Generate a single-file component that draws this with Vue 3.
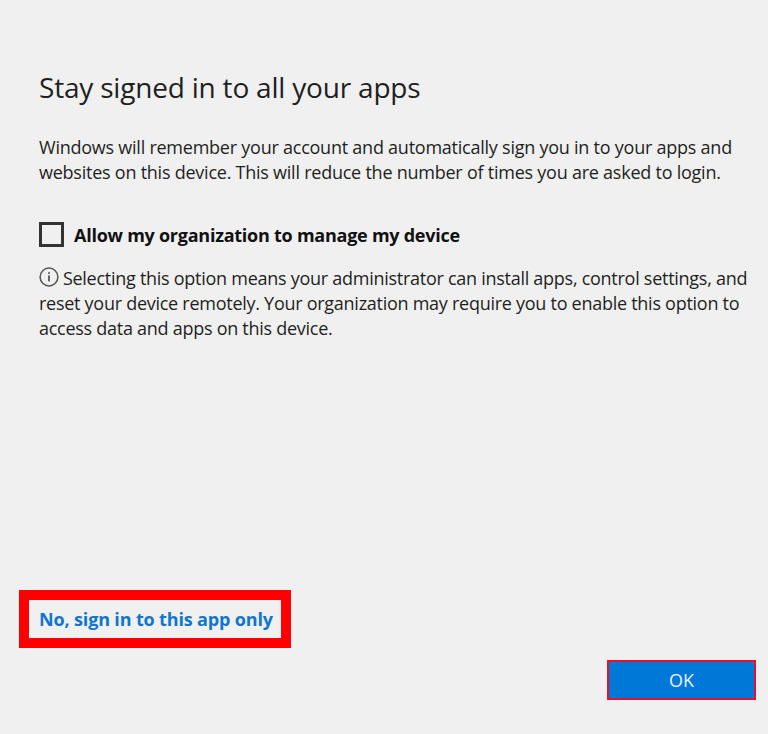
<template>
    <div class="dialog">
        <div class="content">
            <h1 class="title">Stay signed in to all your apps</h1>
            <p class="intro">
                Windows will remember your account and automatically sign you in to your apps and<br />
                websites on this device. This will reduce the number of times you are asked to login.
            </p>

            <label class="check-row">
                <span class="check-box"></span>
                <span class="check-label">Allow my organization to manage my device</span>
            </label>

            <p class="note">
                <svg class="info-icon" width="20" height="20" viewBox="0 0 20 20">
                    <circle cx="10" cy="10" r="8.9" fill="none" stroke="#555" stroke-width="1.5" />
                    <rect x="9.2" y="8.4" width="1.6" height="6" fill="#444" />
                    <rect x="9.2" y="5.2" width="1.6" height="1.7" fill="#444" />
                </svg>
                Selecting this option means your administrator can install apps, control settings, and<br />
                reset your device remotely. Your organization may require you to enable this option to<br />
                access data and apps on this device.
            </p>
        </div>

        <div class="link-box">
            <a class="link" href="#">No, sign in to this app only</a>
        </div>

        <div class="actions">
            <button class="ok-btn">OK</button>
        </div>
    </div>
</template>

<script setup>
</script>

<style>
html,
body {
    margin: 0;
    background: #f0f0f0;
}
</style>

<style scoped>
.dialog {
    height: 734px;
    box-sizing: border-box;
    padding: 67px 12px 34px 19px;
    background: #f0f0f0;
    display: flex;
    flex-direction: column;
    font-family: "Open Sans", "Noto Sans", sans-serif;
    color: #1f1f1f;
}

.content {
    padding-left: 20px;
    flex: 1;
}

.title {
    margin: 0;
    font-size: 28px;
    line-height: 40px;
    font-weight: 400;
    letter-spacing: -0.2px;
}

.intro {
    margin: 28px 0 0;
    font-size: 18px;
    line-height: 25px;
    letter-spacing: -0.24px;
    white-space: nowrap;
}

.check-row {
    margin-top: 37px;
    display: flex;
    align-items: center;
    gap: 10px;
}

.check-box {
    width: 25px;
    height: 25px;
    box-sizing: border-box;
    border: 3px solid #333;
}

.check-label {
    font-size: 18px;
    font-weight: 700;
    letter-spacing: -0.25px;
    color: #111;
}

.note {
    margin: 19px 0 0;
    font-size: 18px;
    line-height: 25px;
    letter-spacing: -0.27px;
    white-space: nowrap;
}

.info-icon {
    vertical-align: -2px;
    margin-left: -0.5px;
}

.link-box {
    align-self: flex-start;
    box-sizing: border-box;
    width: 272px;
    height: 58px;
    border: 10px solid #ff0000;
    padding-left: 10px;
    display: flex;
    align-items: center;
}

.link {
    color: #0f76cf;
    font-size: 18px;
    font-weight: 700;
    letter-spacing: -0.15px;
    text-decoration: none;
    white-space: nowrap;
}

.actions {
    margin-top: 12px;
    display: flex;
    justify-content: flex-end;
}

.ok-btn {
    width: 149px;
    height: 40px;
    box-sizing: border-box;
    background: #0078d7;
    border: 2px solid #e8112d;
    color: #e6f2fb;
    font-family: inherit;
    font-size: 18px;
}
</style>
